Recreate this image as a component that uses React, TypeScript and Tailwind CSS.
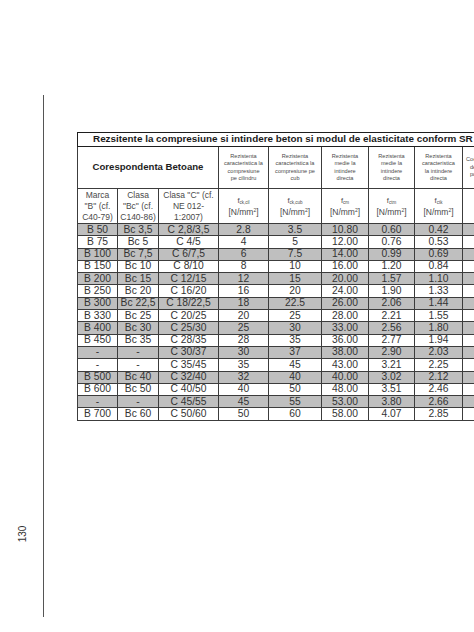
import React from "react";

const rows: { m: string; b: string; c: string; v: string[]; gray: boolean }[] = [
  { m: "B 50", b: "Bc 3,5", c: "C 2,8/3,5", v: ["2.8", "3.5", "10.80", "0.60", "0.42"] },
  { m: "B 75", b: "Bc 5", c: "C 4/5", v: ["4", "5", "12.00", "0.76", "0.53"] },
  { m: "B 100", b: "Bc 7,5", c: "C 6/7,5", v: ["6", "7.5", "14.00", "0.99", "0.69"] },
  { m: "B 150", b: "Bc 10", c: "C 8/10", v: ["8", "10", "16.00", "1.20", "0.84"] },
  { m: "B 200", b: "Bc 15", c: "C 12/15", v: ["12", "15", "20.00", "1.57", "1.10"] },
  { m: "B 250", b: "Bc 20", c: "C 16/20", v: ["16", "20", "24.00", "1.90", "1.33"] },
  { m: "B 300", b: "Bc 22,5", c: "C 18/22,5", v: ["18", "22.5", "26.00", "2.06", "1.44"] },
  { m: "B 330", b: "Bc 25", c: "C 20/25", v: ["20", "25", "28.00", "2.21", "1.55"] },
  { m: "B 400", b: "Bc 30", c: "C 25/30", v: ["25", "30", "33.00", "2.56", "1.80"] },
  { m: "B 450", b: "Bc 35", c: "C 28/35", v: ["28", "35", "36.00", "2.77", "1.94"] },
  { m: "-", b: "-", c: "C 30/37", v: ["30", "37", "38.00", "2.90", "2.03"] },
  { m: "-", b: "-", c: "C 35/45", v: ["35", "45", "43.00", "3.21", "2.25"] },
  { m: "B 500", b: "Bc 40", c: "C 32/40", v: ["32", "40", "40.00", "3.02", "2.12"] },
  { m: "B 600", b: "Bc 50", c: "C 40/50", v: ["40", "50", "48.00", "3.51", "2.46"] },
  { m: "-", b: "-", c: "C 45/55", v: ["45", "55", "53.00", "3.80", "2.66"] },
  { m: "B 700", b: "Bc 60", c: "C 50/60", v: ["50", "60", "58.00", "4.07", "2.85"] },
].map((r, i) => ({ ...r, gray: i % 2 === 0 }));

const cell = "border-r border-b border-[#3c3c3c] flex items-center justify-center overflow-hidden";

function SmallHead({ lines }: { lines: string[] }) {
  return (
    <div className={`${cell} flex-col text-[5.6px] leading-[7.4px] text-[#4a4a4a] text-center`}>
      {lines.map((l, i) => (
        <span key={i} className="whitespace-nowrap">{l}</span>
      ))}
    </div>
  );
}

function Unit({ sym, sub }: { sym: string; sub: string }) {
  return (
    <div className={`${cell} flex-col text-[#4a4a4a] pt-[2px]`}>
      <span className="text-[7.5px] leading-[10px]">
        {sym}
        <span className="text-[4.5px] relative top-[1px]">{sub}</span>
      </span>
      <span className="text-[8.5px] leading-[11px] whitespace-nowrap">
        [N/mm<span className="text-[5px] relative -top-[3px]">2</span>]
      </span>
    </div>
  );
}

export default function App() {
  return (
    <div
      className="w-[474px] h-[632px] bg-white overflow-hidden flex"
      style={{ fontFamily: '"Liberation Sans", Arial, sans-serif' }}
    >
      <div className="w-[43px] shrink-0 flex flex-col justify-end items-center pb-[93px] pl-[4px]">
        <span className="text-[10px] text-[#333] -rotate-90 leading-none">130</span>
      </div>
      <div className="mt-[95px] h-[522px] w-px shrink-0 bg-[#555]" />
      <div className="pl-[33px] pt-[132px] shrink-0">
        <div className="grid grid-cols-[40px_41px_60px_50px_53px_47px_46px_48px_60px] grid-rows-[14px_42px_35px_repeat(16,12.3px)] border-l border-t border-[#3c3c3c] w-[446px] text-[#333]">
          <div className="col-span-9 border-[1.5px] border-[#1e1e1e] -ml-px -mt-px flex items-center pl-[15px] font-bold text-[9.9px] text-[#1a1a1a] whitespace-nowrap overflow-hidden">
            Rezsitente la compresiune si intindere beton si modul de elasticitate conform SR EN
          </div>
          <div className={`${cell} col-span-3 font-bold text-[9.6px] text-[#1e1e1e]`}>
            Corespondenta Betoane
          </div>
          <SmallHead lines={["Rezistenta", "caracteristica la", "compresiune", "pe cilindru"]} />
          <SmallHead lines={["Rezistenta", "caracteristica la", "compresiune pe", "cub"]} />
          <SmallHead lines={["Rezistenta", "medie la", "intindere", "directa"]} />
          <SmallHead lines={["Rezistenta", "medie la", "intindere", "directa"]} />
          <SmallHead lines={["Rezistenta", "caracteristica", "la intindere", "directa"]} />
          <div className={`${cell} flex-col items-start pl-[3px] text-[5.6px] leading-[7.4px] text-[#4a4a4a]`}>
            <span className="whitespace-nowrap">Coeficient</span>
            <span className="whitespace-nowrap pl-[4px]">de</span>
            <span className="whitespace-nowrap pl-[4px]">poisson</span>
          </div>
          <div className={`${cell} flex-col text-[8.5px] leading-[11px] text-[#4a4a4a] text-center`}>
            <span>Marca</span>
            <span>"B" (cf.</span>
            <span>C40-79)</span>
          </div>
          <div className={`${cell} flex-col text-[8.5px] leading-[11px] text-[#4a4a4a] text-center`}>
            <span>Clasa</span>
            <span>"Bc" (cf.</span>
            <span>C140-86)</span>
          </div>
          <div className={`${cell} flex-col text-[8.5px] leading-[11px] text-[#4a4a4a] text-center`}>
            <span className="whitespace-nowrap">Clasa "C" (cf.</span>
            <span>NE 012-</span>
            <span>1:2007)</span>
          </div>
          <Unit sym="f" sub="ck,cil" />
          <Unit sym="f" sub="ck,cub" />
          <Unit sym="f" sub="cm" />
          <Unit sym="f" sub="ctm" />
          <Unit sym="f" sub="ctk" />
          <div className={cell} />
          {rows.map((r, i) => {
            const bg = r.gray ? "bg-[#bfbfbf]" : "bg-white";
            const c = `${cell} ${bg} text-[10.3px] leading-none`;
            return (
              <React.Fragment key={i}>
                <div className={c}>{r.m}</div>
                <div className={c}>{r.b}</div>
                <div className={c}>{r.c}</div>
                {r.v.map((v, j) => (
                  <div key={j} className={c}>{v}</div>
                ))}
                <div className={c} />
              </React.Fragment>
            );
          })}
        </div>
      </div>
    </div>
  );
}
